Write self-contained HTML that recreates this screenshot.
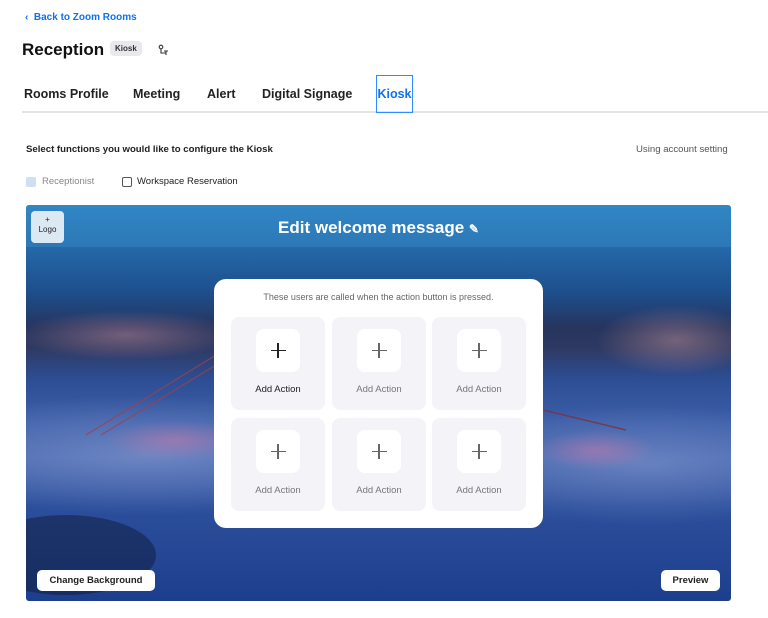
<!DOCTYPE html>
<html><head><meta charset="utf-8"><style>
*{box-sizing:border-box;margin:0;padding:0}
body{width:768px;height:618px;background:#fff;font-family:"Liberation Sans",sans-serif;position:relative;overflow:hidden;color:#222}
.abs{position:absolute}
.back{left:25px;top:12px;font-size:10px;color:#0e72ed;font-weight:bold}
.title{left:22px;top:40px;font-size:17px;font-weight:bold;color:#111}
.badge{left:110px;top:41px;background:#e8e9ee;border-radius:4px;font-size:8px;font-weight:bold;padding:3px 5px;color:#333}
.tabs{top:87px;font-size:12.5px;font-weight:bold;color:#222}
.line{left:22px;top:111px;width:746px;height:2px;background:#e3e4e8}
.kiosk{left:376px;top:75px;width:37px;height:38px;border:1.5px solid #2d8cff;color:#0e72ed;font-size:12.5px;font-weight:bold;text-align:center;padding-top:11px}
.sel{left:26px;top:144px;font-size:9.6px;font-weight:bold;color:#222}
.acct{left:636px;top:144px;font-size:9.6px;color:#555}
.cb{width:10px;height:10px;border-radius:2px}
.img{left:26px;top:205px;width:705px;height:396px;border-radius:3px;overflow:hidden;
background:
radial-gradient(ellipse 110px 25px at 100px 130px,rgba(255,170,170,.35),transparent),
radial-gradient(ellipse 80px 35px at 650px 135px,rgba(255,180,170,.35),transparent),
radial-gradient(ellipse 70px 20px at 150px 235px,rgba(255,120,160,.35),transparent),
radial-gradient(ellipse 60px 20px at 570px 245px,rgba(255,120,160,.35),transparent),
radial-gradient(ellipse 260px 60px at 120px 250px,rgba(150,165,215,.5),transparent),
radial-gradient(ellipse 220px 60px at 620px 260px,rgba(150,165,215,.45),transparent),
linear-gradient(180deg,#2c7fbf 0%,#2568a8 11%,#1d4f8c 22%,#26345e 31%,#2e3962 36%,#2d4e93 44%,#3c5ea8 55%,#4466ae 64%,#2c4f9c 76%,#1d3e8d 100%)}
.hdr{left:0;top:0;width:705px;height:42px;background:rgba(60,150,210,.35)}
.logo{left:5px;top:6px;width:33px;height:32px;background:#dde9f2;border-radius:4px;font-size:8px;text-align:center;color:#222;padding-top:4px;line-height:10px}
.wel{left:0;width:705px;top:13px;text-align:center;color:#fff;font-size:17px;font-weight:bold}
.card{left:188px;top:74px;width:329px;height:249px;background:#fff;border-radius:12px}
.note{left:0;width:329px;top:13px;text-align:center;font-size:9px;color:#666}
.tile{width:94px;height:93px;background:#f4f4f8;border-radius:8px}
.ib{left:25px;top:12px;width:44px;height:43px;background:#fff;border-radius:8px}
.ib:before,.ib:after{content:"";position:absolute;background:#666;left:21.25px;top:14px;width:1.5px;height:15px}
.ib:after{left:14.5px;top:20.75px;width:15px;height:1.5px}
.dk:before,.dk:after{background:#222}
.lab{left:0;width:94px;top:67px;text-align:center;font-size:9.5px;color:#777}
.btn{background:#fff;border-radius:5px;font-size:9.5px;font-weight:bold;color:#222;text-align:center;line-height:21px;height:21px}
</style></head><body>
<div class="abs back">&lsaquo;&nbsp;&nbsp;Back to Zoom Rooms</div>
<div class="abs title">Reception</div>
<div class="abs badge">Kiosk</div>
<svg class="abs" style="left:158px;top:44px" width="12" height="12" viewBox="0 0 12 12" fill="none" stroke="#333" stroke-width="1.1"><circle cx="3" cy="3" r="1.8"/><path d="M3 5v4h5M6 7h4M8 7v4"/></svg>
<div class="abs tabs" style="left:24px">Rooms Profile</div>
<div class="abs tabs" style="left:133px">Meeting</div>
<div class="abs tabs" style="left:207px">Alert</div>
<div class="abs tabs" style="left:262px">Digital Signage</div>
<div class="abs line"></div>
<div class="abs kiosk">Kiosk</div>
<div class="abs sel">Select functions you would like to configure the Kiosk</div>
<div class="abs acct">Using account setting</div>
<div class="abs cb" style="left:26px;top:177px;background:#cfe0f5"></div>
<div class="abs" style="left:42px;top:176px;font-size:9.5px;color:#888">Receptionist</div>
<div class="abs cb" style="left:122px;top:177px;border:1px solid #555"></div>
<div class="abs" style="left:137px;top:176px;font-size:9.5px;color:#222">Workspace Reservation</div>
<div class="abs img">
<svg class="abs" style="left:0;top:0" width="705" height="396">
<path d="M60 230 L190 150 M75 230 L190 160" stroke="#a0404a" stroke-width="1.2" opacity=".8"/>
<path d="M517 205 L600 225" stroke="#803040" stroke-width="1.5" opacity=".8"/>
<ellipse cx="40" cy="350" rx="90" ry="40" fill="#0d1c3a" opacity=".5"/>
</svg>
<div class="abs hdr"></div>
<div class="abs logo">+<br>Logo</div>
<div class="abs wel">Edit welcome message <span style="font-size:12px">&#9998;</span></div>
<div class="abs card">
<div class="abs note">These users are called when the action button is pressed.</div>
<div class="abs tile" style="left:17px;top:38px"><div class="abs ib dk"></div><div class="abs lab" style="color:#222">Add Action</div></div>
<div class="abs tile" style="left:118px;top:38px"><div class="abs ib"></div><div class="abs lab">Add Action</div></div>
<div class="abs tile" style="left:218px;top:38px"><div class="abs ib"></div><div class="abs lab">Add Action</div></div>
<div class="abs tile" style="left:17px;top:139px"><div class="abs ib"></div><div class="abs lab">Add Action</div></div>
<div class="abs tile" style="left:118px;top:139px"><div class="abs ib"></div><div class="abs lab">Add Action</div></div>
<div class="abs tile" style="left:218px;top:139px"><div class="abs ib"></div><div class="abs lab">Add Action</div></div>
</div>
<div class="abs btn" style="left:11px;top:365px;width:118px">Change Background</div>
<div class="abs btn" style="left:635px;top:365px;width:59px">Preview</div>
</div>
</body></html>
